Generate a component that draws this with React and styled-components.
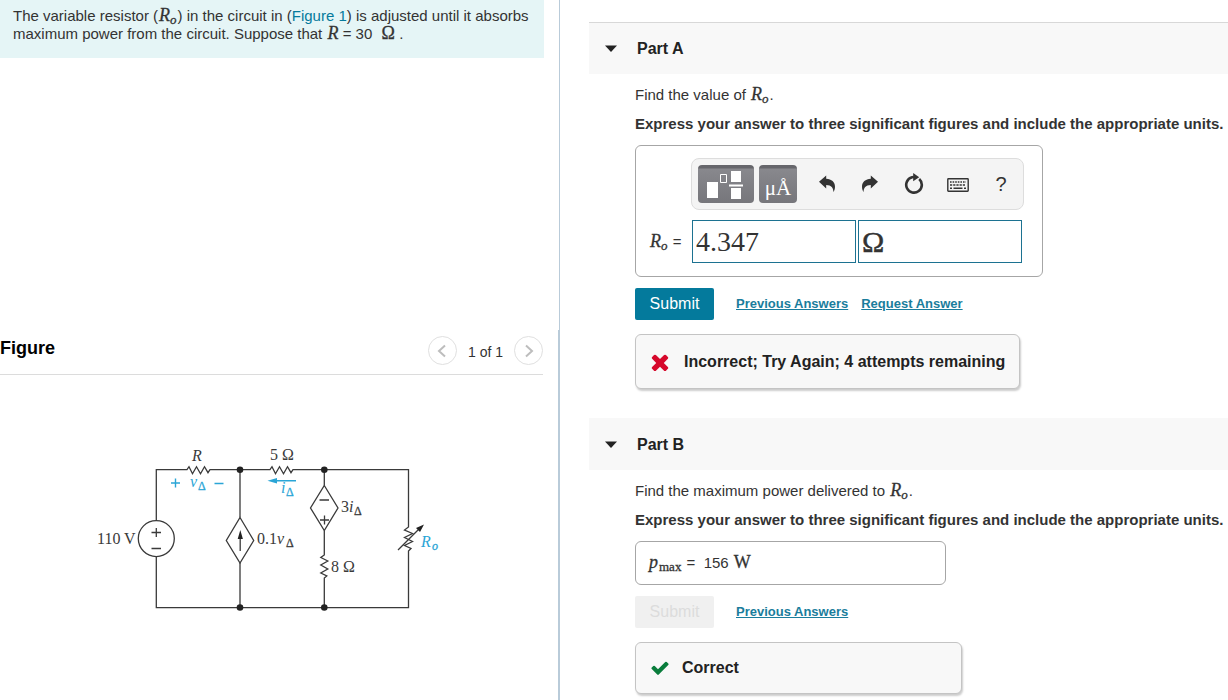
import React from 'react';
import styled, { createGlobalStyle } from 'styled-components';

const GlobalStyle = createGlobalStyle`
  * {
    box-sizing: border-box;
  }

  body {
    margin: 0;
    background: #fff;
    color: #333;
    font-family: 'Liberation Sans', Arial, sans-serif;
    font-size: 15px;
    line-height: 18px;
  }

  button, input {
    font-family: inherit;
    margin: 0;
  }
`;

const Page = styled.div`
  display: grid;
  grid-template-columns: 140fr 167fr;
  min-height: 100vh;
`;

const LeftPane = styled.div`
  display: flex;
  flex-direction: column;
  min-width: 0;
`;

const PromptPane = styled.section`
  min-height: 330px;
  padding-right: 15px;
  border-right: 1px solid #b9cbd9;
`;

const Prompt = styled.p`
  margin: 0;
  padding: 7px 8px 15px 13px;
  background: #e5f5f6;
`;

const PromptLink = styled.a`
  color: #047a9c;
  text-decoration: none;
`;

const FigurePane = styled.section`
  flex: 1;
  padding-right: 15px;
  border-right: 2px solid #b9cbd9;
`;

const FigureHeader = styled.div`
  display: flex;
  justify-content: space-between;
  align-items: center;
  height: 45px;
  border-bottom: 1px solid #dcdcdc;
`;

const FigureTitle = styled.h2`
  margin: 0 0 9px;
  color: #000;
  font-size: 18px;
`;

const Pager = styled.div`
  display: flex;
  align-items: center;
  gap: 11px;
  margin-bottom: 3px;
  font-size: 14px;
`;

const PagerLabel = styled.span`
  padding-top: 3px;
`;

const PagerButton = styled.button`
  display: flex;
  align-items: center;
  justify-content: center;
  width: 29px;
  height: 29px;
  padding: 0;
  border: 1px solid #e0e0e0;
  border-radius: 50%;
  background: #fff;
`;

const CircuitBox = styled.div`
  padding: 65px 0 20px 90px;
`;

const RightPane = styled.main`
  min-width: 0;
  padding: 22px 0 6px 29px;
`;

const PartHeader = styled.header`
  display: flex;
  align-items: center;
  gap: 20px;
  height: 52px;
  padding-left: 16px;
  border-top: 1px solid ${(props) => (props.$first ? '#d8d8d8' : '#f8f8f8')};
  background: #f8f8f8;
`;

const PartTitle = styled.h2`
  margin: 0;
  color: #222;
  font-size: 16px;
`;

const PartBody = styled.div`
  padding: 12px 0 29px 46px;
`;

const Question = styled.p`
  margin: 0 0 11px;
`;

const Instruction = styled.p`
  margin: 0 0 12px;
  font-weight: bold;
`;

const MathText = styled.span`
  padding-left: 1px;
  font-family: 'Liberation Serif', 'Times New Roman', serif;
  font-size: ${(props) => (props.$small ? 15 : 18)}px;
  font-style: ${(props) => (props.$upright ? 'normal' : 'italic')};
  line-height: 1px;
  -webkit-text-stroke: 0.3px currentColor;

  sub {
    padding-right: 1px;
    font-size: 13px;
    line-height: 1px;
    vertical-align: -3px;
  }
`;

const AnswerBox = styled.form`
  max-width: 408px;
  padding: 12px 18px 13px 0;
  border: 1px solid #a6a6a6;
  border-radius: 6px;
`;

const Toolbar = styled.div`
  display: flex;
  align-items: center;
  height: 52px;
  margin: 0 0 10px 55px;
  padding-left: 6px;
  border: 1px solid #ddd;
  border-radius: 8px;
  background: #f4f4f4;
`;

const PaletteButton = styled.button`
  flex: none;
  width: ${(props) => (props.$wide ? 56 : 38)}px;
  height: 38px;
  margin-right: ${(props) => (props.$wide ? 5 : 8)}px;
  padding: 0;
  border: 0;
  border-radius: 4px;
  background: linear-gradient(#66666b 0, #66666b 3px, #88888d 4px, #76767b 100%);
  color: #fff;

  svg {
    display: block;
  }
`;

const UnitsLabel = styled.span`
  display: block;
  padding-top: 9px;
  font-family: 'Liberation Serif', 'Times New Roman', serif;
  font-size: 21px;
  line-height: 29px;
`;

const ToolButton = styled.button`
  display: flex;
  align-items: center;
  justify-content: center;
  flex: 1 1 43px;
  height: 38px;
  padding: 0;
  border: 0;
  background: none;
  color: #333;
  font-size: 20px;
`;

const AnswerRow = styled.div`
  display: flex;
  align-items: center;
`;

const AnswerLabel = styled.label`
  width: 56px;
  padding-left: 13px;
  white-space: nowrap;
`;

const AnswerInput = styled.input`
  flex: 1;
  min-width: 0;
  height: 43px;
  margin-right: 2px;
  padding: 0 3px;
  border: 1px solid #1c7291;
  border-radius: 0;
  background: #fff;
  color: #333;
  font-family: 'Liberation Serif', 'Times New Roman', serif;
  font-size: 28px;
`;

const UnitInput = styled(AnswerInput)`
  font-size: 30px;
  -webkit-text-stroke: 0.4px currentColor;
`;

const Actions = styled.div`
  display: flex;
  align-items: center;
  gap: 13px;
  margin: 11px 0 14px;
`;

const SubmitButton = styled.button`
  width: 79px;
  height: 32px;
  margin-right: 9px;
  padding: 0;
  border: 0;
  border-radius: 2px;
  background: #047a9c;
  color: #fff;
  font-size: 16px;

  &:disabled {
    background: #f0f0f0;
    color: #dcdcdc;
  }
`;

const ActionLink = styled.a`
  color: #1a7d9c;
  font-size: 13px;
  font-weight: bold;
`;

const Feedback = styled.div`
  display: flex;
  align-items: center;
  gap: ${(props) => (props.$wide ? 15 : 13)}px;
  max-width: ${(props) => (props.$wide ? 385 : 327)}px;
  height: ${(props) => (props.$wide ? 55 : 52)}px;
  padding-left: 15px;
  border: 1px solid #c4c4c4;
  border-radius: 6px;
  background: #f8f8f8;
  box-shadow: 1px 2px 2px rgba(0, 0, 0, 0.2);
  color: #222;
  font-size: 16px;
  font-weight: bold;
`;

const ResultBox = styled.div`
  display: flex;
  align-items: center;
  max-width: 311px;
  height: 44px;
  padding-left: 12px;
  border: 1px solid #a6a6a6;
  border-radius: 6px;
  white-space: pre;
`;

function Resistance() {
  return (
    <MathText>
      R<sub>o</sub>
    </MathText>
  );
}

function Chevron({ left }) {
  return (
    <svg width="10" height="14" viewBox="0 0 10 14" fill="none" stroke="#bdbdbd" strokeWidth="2">
      <path d={left ? 'M8 1.5L2 7l6 5.5' : 'M2 1.5L8 7l-6 5.5'} />
    </svg>
  );
}

function Caret() {
  return (
    <svg width="12" height="7" viewBox="0 0 12 7" fill="#222">
      <path d="M0 0.5h12L6 7z" />
    </svg>
  );
}

function TemplateIcon() {
  return (
    <svg width="56" height="38" viewBox="0 0 56 38">
      <path fill="#fff" d="M9 17h11v16H9zM33 6h10v11H33zM31 19.5h14v2H31zM33 23h10v11H33z" />
      <path fill="none" stroke="#fff" strokeWidth="1" d="M22.5 9.5h6v8h-6z" />
    </svg>
  );
}

function UndoIcon({ flip }) {
  return (
    <svg width="16" height="18" viewBox="0 0 16 18" fill="currentColor">
      <path
        transform={flip ? 'translate(16 0) scale(-1 1)' : undefined}
        d="M0 6.8L7.2 0.4v3.4c5.4 0.200 8.800 3.400 8.800 8 0 2.200-0.700 3.900-1.600 5.200 0-4.200-2-6.800-7.200-7v3.400z"
      />
    </svg>
  );
}

function ResetIcon() {
  return (
    <svg width="20" height="22" viewBox="0 0 20 22">
      <path d="M15.200 6A7.800 7.800 0 1 1 8 4.300L10 3.900" fill="none" stroke="currentColor" strokeWidth="2.600" />
      <path d="M9.200 0l6 4.200-6 4z" fill="currentColor" />
    </svg>
  );
}

function KeyboardIcon() {
  return (
    <svg width="22" height="20" viewBox="0 0 22 20" fill="none" stroke="currentColor">
      <rect x="0.800" y="4.800" width="20.400" height="12.400" rx="0.600" strokeWidth="1.400" />
      <path d="M3 8h16" strokeWidth="1.600" strokeDasharray="1.6 1" />
      <path d="M3 11h16" strokeWidth="1.600" strokeDasharray="2.2 1" />
      <path d="M3 14.200h2M6.500 14.200h9M17 14.200h2" strokeWidth="1.600" />
    </svg>
  );
}

function WrongIcon() {
  return (
    <svg width="18" height="18" viewBox="248 248 1296 1296" fill="#d6082b">
      <path d="M1490 1322q0 40-28 68l-136 136q-28 28-68 28t-68-28l-294-294-294 294q-28 28-68 28t-68-28l-136-136q-28-28-28-68t28-68l294-294-294-294q-28-28-28-68t28-68l136-136q28-28 68-28t68 28l294 294 294-294q28-28 68-28t68 28l136 136q28 28 28 68t-28 68l-294 294 294 294q28 28 28 68z" />
    </svg>
  );
}

function RightIcon() {
  return (
    <svg width="18" height="18" viewBox="80 80 1632 1632" fill="#0a7d3c">
      <path d="M1671 566q0 40-28 68l-724 724-136 136q-28 28-68 28t-68-28l-136-136-362-362q-28-28-28-68t28-68l136-136q28-28 68-28t68 28l294 295 656-657q28-28 68-28t68 28l136 136q28 28 28 68z" />
    </svg>
  );
}

const CircuitSvg = styled.svg`
  display: block;
  max-width: 100%;

  text {
    fill: #3a3a3a;
    font-family: 'Liberation Serif', 'Times New Roman', serif;
    font-size: 16px;
  }

  .it {
    font-style: italic;
  }

  .sub {
    font-size: 12px;
    stroke: #3a3a3a;
    stroke-width: 0.3px;
  }

  .blue {
    fill: #2aa5d6;
  }

  .sub.blue {
    stroke: #2aa5d6;
  }
`;

function Circuit() {
  return (
    <CircuitSvg width="360" height="180" viewBox="90 440 360 180" role="img" aria-label="Circuit diagram">
      <g fill="none" stroke="#3a3a3a" strokeWidth="1.3">
        <path d="M156.3 520.5V469.7H187l2-3 3.5 7 4-7 4 7 4-7 3.5 6 2-3H270l2-3 3.5 7 4-7 4 7 4-7 3.5 6 2-3H408.5V527l-4 3 8 3.5-8 4 8 4-8 4 6.5 3-2.5 2.5V607.7H156.3V556.7" />
        <circle cx="156.3" cy="538.6" r="18" />
        <path d="M151.5 532.5h9.500M156.300 528v9M151.500 548.500h9.500" />
        <path d="M240 469.7V517.5M240 563V607.7" />
        <path d="M240 517.5l13.7 23L240 563l-13.7-22.5z" />
        <path d="M240.2 551V538" />
        <path d="M324.3 469.7V485.5M324.3 530.5V555l-3.5 2.5 7 3.5-7 4 7 4-7 4 6 3-2.500 2V607.700" />
        <path d="M324.3 485.5l13.7 22.500-13.700 22.500L310.500 508z" />
        <path d="M319.500 500h9.500M320 520h9M324.500 515.500v9" />
        <path d="M398 550l21-21" />
      </g>
      <g fill="#222">
        <circle cx="240" cy="469.8" r="3.3" />
        <circle cx="324.3" cy="469.8" r="3.3" />
        <circle cx="240" cy="607.5" r="3.3" />
        <circle cx="324.3" cy="607.5" r="3.3" />
        <path d="M240.3 530l2.600 9h-5.200zM424 524.500l-4 7.500-4-4z" />
      </g>
      <path d="M274 480.7H296M171 483h9M175.500 478.500v9M214.500 483.500h9" fill="none" stroke="#2aa5d6" strokeWidth="1.4" />
      <path d="M267.5 480.7l9.500-2.800v5.600z" fill="#2aa5d6" />
      <text x="192" y="461" className="it">R</text>
      <text x="190" y="487" className="it blue">v</text>
      <text x="198" y="490" className="sub blue">Δ</text>
      <text x="270" y="460">5 Ω</text>
      <text x="281" y="493" className="it blue">i</text>
      <text x="286" y="496" className="sub blue">Δ</text>
      <text x="97" y="544">110 V</text>
      <text x="257" y="544">0.1<tspan className="it">v</tspan></text>
      <text x="286" y="547" className="sub">Δ</text>
      <text x="341" y="512">3<tspan className="it">i</tspan></text>
      <text x="354" y="515" className="sub">Δ</text>
      <text x="331" y="572">8 Ω</text>
      <text x="421" y="547" className="it blue">R</text>
      <text x="432" y="550" className="it sub blue">o</text>
    </CircuitSvg>
  );
}

function App() {
  return (
    <Page>
      <GlobalStyle />
      <LeftPane>
        <PromptPane>
          <Prompt>
            The variable resistor (<Resistance />) in the circuit in (
            <PromptLink href="#figure1">Figure 1</PromptLink>) is adjusted until it absorbs
            maximum power from the circuit. Suppose that <MathText>R</MathText> = 30 &nbsp;
            <MathText $upright>Ω</MathText> .
          </Prompt>
        </PromptPane>
        <FigurePane id="figure1">
          <FigureHeader>
            <FigureTitle>Figure</FigureTitle>
            <Pager>
              <PagerButton aria-label="Previous figure"><Chevron left /></PagerButton>
              <PagerLabel>1 of 1</PagerLabel>
              <PagerButton aria-label="Next figure"><Chevron /></PagerButton>
            </Pager>
          </FigureHeader>
          <CircuitBox>
            <Circuit />
          </CircuitBox>
        </FigurePane>
      </LeftPane>

      <RightPane>
        <PartHeader $first>
          <Caret />
          <PartTitle>Part A</PartTitle>
        </PartHeader>
        <PartBody>
          <Question>Find the value of <Resistance />.</Question>
          <Instruction>
            Express your answer to three significant figures and include the appropriate units.
          </Instruction>
          <AnswerBox>
            <Toolbar>
              <PaletteButton type="button" $wide aria-label="Templates"><TemplateIcon /></PaletteButton>
              <PaletteButton type="button" aria-label="Units"><UnitsLabel>μÅ</UnitsLabel></PaletteButton>
              <ToolButton type="button" aria-label="Undo"><UndoIcon /></ToolButton>
              <ToolButton type="button" aria-label="Redo"><UndoIcon flip /></ToolButton>
              <ToolButton type="button" aria-label="Reset"><ResetIcon /></ToolButton>
              <ToolButton type="button" aria-label="Keyboard"><KeyboardIcon /></ToolButton>
              <ToolButton type="button">?</ToolButton>
            </Toolbar>
            <AnswerRow>
              <AnswerLabel htmlFor="value"><Resistance /> =</AnswerLabel>
              <AnswerInput id="value" defaultValue="4.347" />
              <UnitInput aria-label="Units" defaultValue="Ω" />
            </AnswerRow>
          </AnswerBox>
          <Actions>
            <SubmitButton>Submit</SubmitButton>
            <ActionLink href="#previous">Previous Answers</ActionLink>
            <ActionLink href="#request">Request Answer</ActionLink>
          </Actions>
          <Feedback $wide>
            <WrongIcon />
            <span>Incorrect; Try Again; 4 attempts remaining</span>
          </Feedback>
        </PartBody>

        <PartHeader>
          <Caret />
          <PartTitle>Part B</PartTitle>
        </PartHeader>
        <PartBody>
          <Question>Find the maximum power delivered to <Resistance />.</Question>
          <Instruction>
            Express your answer to three significant figures and include the appropriate units.
          </Instruction>
          <ResultBox>
            <span><MathText>p</MathText><MathText $upright $small><sub>max</sub></MathText> =  156 <MathText $upright>W</MathText></span>
          </ResultBox>
          <Actions>
            <SubmitButton disabled>Submit</SubmitButton>
            <ActionLink href="#previous">Previous Answers</ActionLink>
          </Actions>
          <Feedback>
            <RightIcon />
            <span>Correct</span>
          </Feedback>
        </PartBody>
      </RightPane>
    </Page>
  );
}

export default App;
